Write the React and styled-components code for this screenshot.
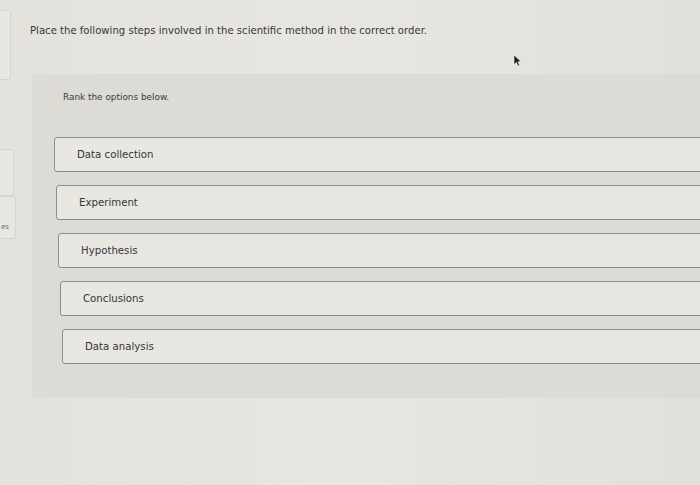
import React from "react";
import styled, { createGlobalStyle } from "styled-components";

const steps = ["Data collection", "Experiment", "Hypothesis", "Conclusions", "Data analysis"];

function Cursor() {
	return (
		<Pointer width="9" height="13" viewBox="0 0 9 13">
			<path d="M1 1 L1 10.5 L3.4 8.4 L5 12 L6.6 11.3 L5 7.8 L8 7.6 Z" fill="#1e1e22" stroke="#f2f2f2" strokeWidth="0.6" />
		</Pointer>
	);
}

export default function App() {
	return (
		<>
			<GlobalStyle />
			<Page>
				<Sidebar>
					<SideBox $top={10} $height={68} $width={10} />
					<SideBox $top={69} $height={45} $width={13} />
					<SideBox $top={0} $height={41} $width={15}>
						<SideLabel>es</SideLabel>
					</SideBox>
				</Sidebar>
				<Main>
					<Title>Place the following steps involved in the scientific method in the correct order.</Title>
					<Panel>
						<Hint>Rank the options below.</Hint>
						<List>
							{steps.map((step, index) => (
								<Option key={step} $shift={index * 2}>
									{step}
								</Option>
							))}
						</List>
					</Panel>
				</Main>
				<Cursor />
			</Page>
		</>
	);
}

const GlobalStyle = createGlobalStyle`
	body {
		margin: 0;
		background: #e6e4df;
		font-family: "DejaVu Sans", "Liberation Sans", sans-serif;
	}
`;

const Page = styled.div`
	position: relative;
	display: flex;
	width: 700px;
	height: 485px;
	overflow: hidden;
	background: linear-gradient(90deg, #e4e2dc 0%, #e8e6e1 50%, #e2e0dc 100%);
`;

const Sidebar = styled.div`
	display: flex;
	flex-direction: column;
	width: 16px;
	flex-shrink: 0;
`;

const SideBox = styled.div`
	position: relative;
	margin-top: ${(p) => p.$top}px;
	width: ${(p) => p.$width}px;
	height: ${(p) => p.$height}px;
	border: 1px solid #d6d4cf;
	border-left: none;
	border-radius: 0 3px 3px 0;
	background: #e9e7e2;
`;

const SideLabel = styled.span`
	position: absolute;
	left: 1px;
	bottom: 7px;
	font-size: 7px;
	color: #6a6a6c;
`;

const Main = styled.div`
	flex: 1;
	display: flex;
	flex-direction: column;
	padding-left: 14px;
	padding-top: 24px;
	min-width: 0;
`;

const Title = styled.div`
	font-size: 10.1px;
	color: #36363a;
	line-height: 14px;
	white-space: nowrap;
`;

const Panel = styled.div`
	margin-top: 36px;
	margin-left: 2px;
	height: 324px;
	background: #dcdbd5;
	padding: 17px 0 0 31px;
	box-sizing: border-box;
`;

const Hint = styled.div`
	font-size: 8.9px;
	color: #3a3a3d;
	line-height: 12px;
`;

const List = styled.div`
	display: flex;
	flex-direction: column;
	gap: 13px;
	margin-top: 34px;
	margin-left: -9px;
`;

const Option = styled.div`
	margin-left: ${(p) => p.$shift}px;
	margin-right: -10px;
	height: 35px;
	box-sizing: border-box;
	display: flex;
	align-items: center;
	padding-left: 22px;
	border: 1.3px solid #8c8c92;
	border-radius: 3px;
	background: #e8e7e2;
	font-size: 10.2px;
	color: #36363a;
`;

const Pointer = styled.svg`
	position: absolute;
	left: 513px;
	top: 54px;
`;
